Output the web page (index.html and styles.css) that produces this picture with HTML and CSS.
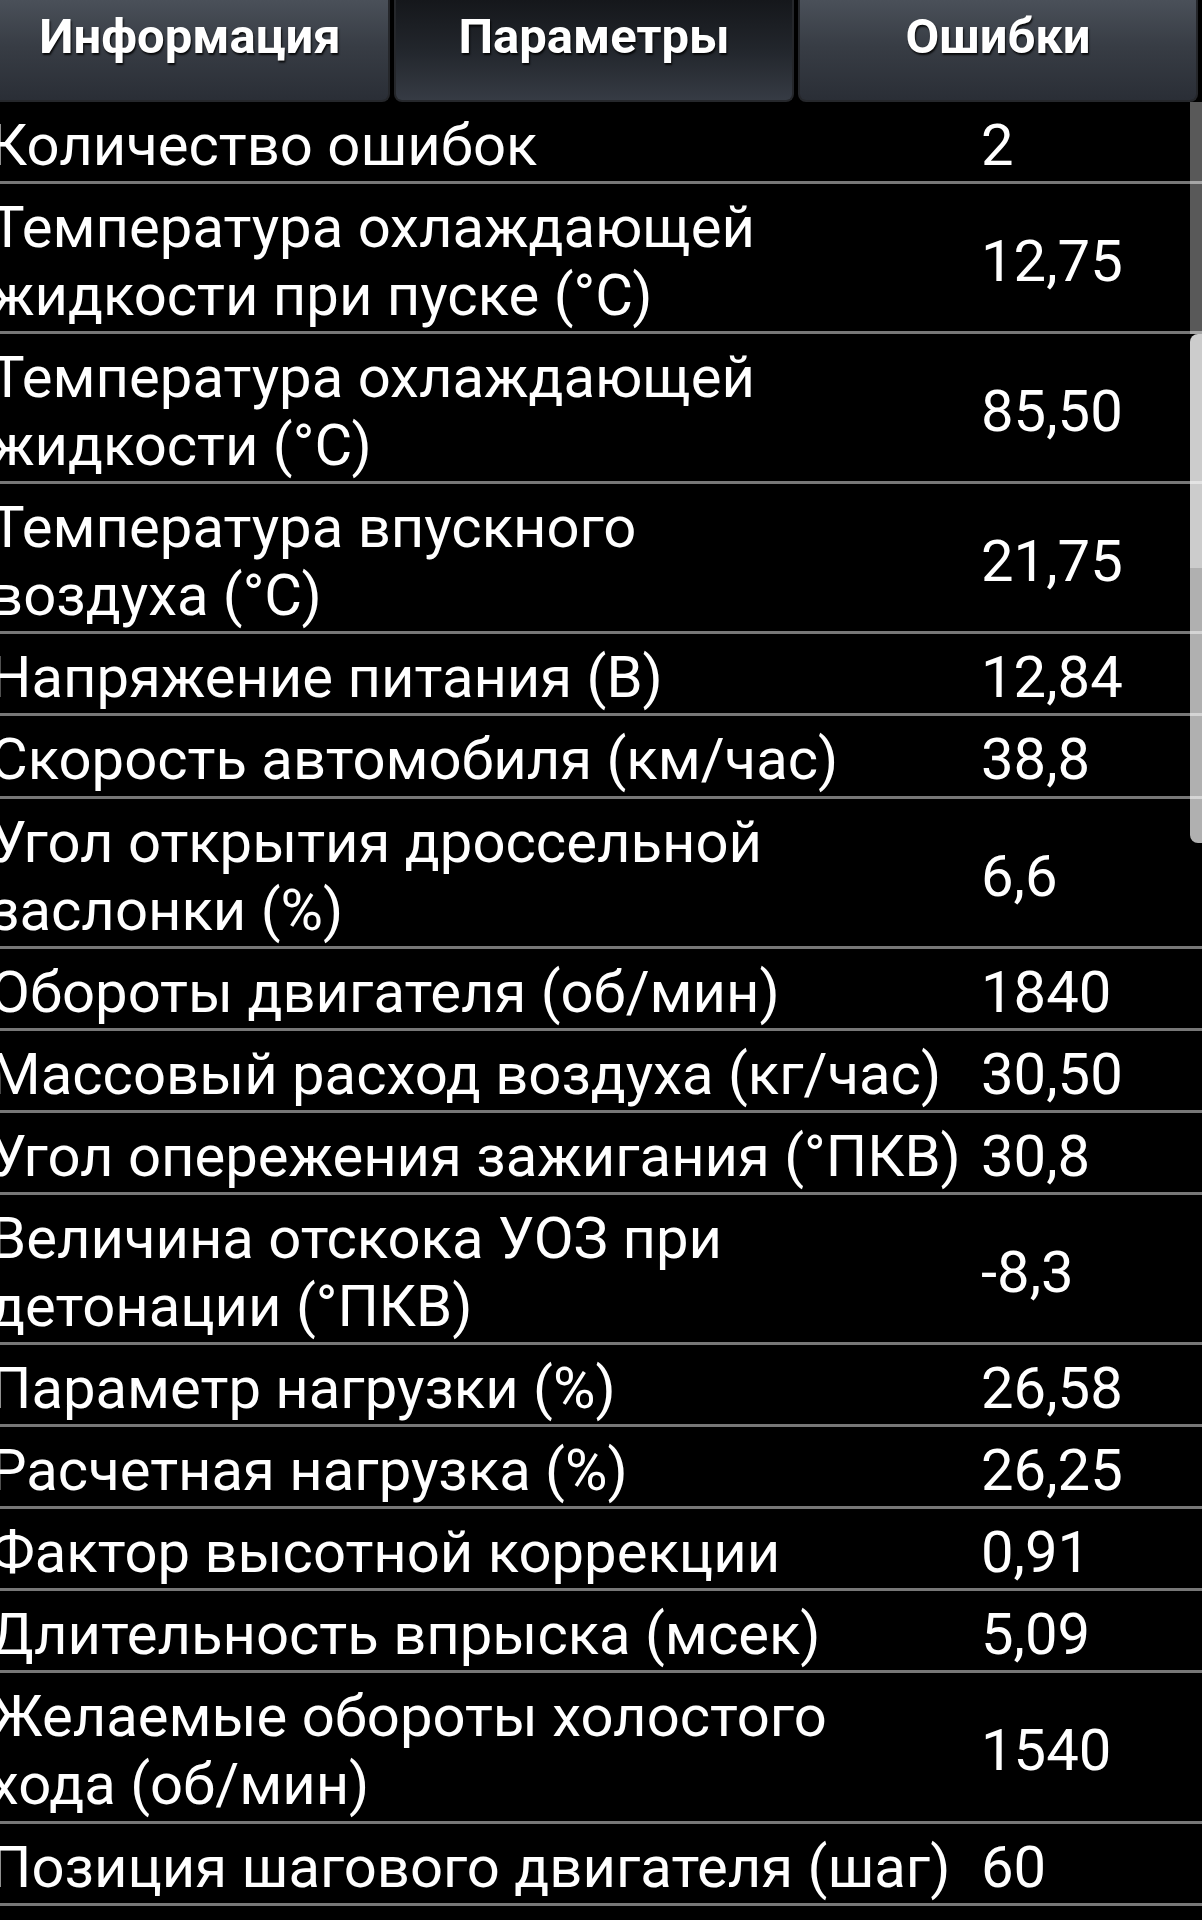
FILE: index.html
```
<!DOCTYPE html>
<html lang="ru">
<head>
<meta charset="utf-8">
<title>Параметры</title>
<link rel="stylesheet" href="styles.css">
</head>
<body>
<div class="screen">
  <div class="tabs">
    <div class="tab">Информация</div>
    <div class="tab tab-active">Параметры</div>
    <div class="tab">Ошибки</div>
  </div>
  <div class="table">
    <div class="row"><div class="label">Количество ошибок</div><div class="value">2</div></div>
    <div class="row"><div class="label">Температура охлаждающей<br>жидкости при пуске (°С)</div><div class="value">12,75</div></div>
    <div class="row"><div class="label">Температура охлаждающей<br>жидкости (°С)</div><div class="value">85,50</div></div>
    <div class="row"><div class="label">Температура впускного<br>воздуха (°С)</div><div class="value">21,75</div></div>
    <div class="row"><div class="label">Напряжение питания (В)</div><div class="value">12,84</div></div>
    <div class="row"><div class="label">Скорость автомобиля (км/час)</div><div class="value">38,8</div></div>
    <div class="row"><div class="label">Угол открытия дроссельной<br>заслонки (%)</div><div class="value">6,6</div></div>
    <div class="row"><div class="label">Обороты двигателя (об/мин)</div><div class="value">1840</div></div>
    <div class="row"><div class="label">Массовый расход воздуха (кг/час)</div><div class="value">30,50</div></div>
    <div class="row"><div class="label">Угол опережения зажигания (°ПКВ)</div><div class="value">30,8</div></div>
    <div class="row"><div class="label">Величина отскока УОЗ при<br>детонации (°ПКВ)</div><div class="value">-8,3</div></div>
    <div class="row"><div class="label">Параметр нагрузки (%)</div><div class="value">26,58</div></div>
    <div class="row"><div class="label">Расчетная нагрузка (%)</div><div class="value">26,25</div></div>
    <div class="row"><div class="label">Фактор высотной коррекции</div><div class="value">0,91</div></div>
    <div class="row"><div class="label">Длительность впрыска (мсек)</div><div class="value">5,09</div></div>
    <div class="row"><div class="label">Желаемые обороты холостого<br>хода (об/мин)</div><div class="value">1540</div></div>
    <div class="row"><div class="label">Позиция шагового двигателя (шаг)</div><div class="value">60</div></div>
  </div>
  <div class="scroll-track"></div>
  <div class="scroll-thumb"></div>
</div>
</body>
</html>
```
FILE: styles.css
```
html, body {
  margin: 0;
  padding: 0;
  background: #000;
  overflow: hidden;
}
body {
  width: 1202px;
  height: 1920px;
  position: relative;
  font-family: Roboto, "Noto Sans", sans-serif;
  color: #fff;
}
.screen {
  margin-left: -10px;
  width: 1212px;
}
.tabs {
  display: flex;
  gap: 4px;
  width: 1208px;
  height: 102px;
}
.tab {
  flex: 1;
  box-sizing: border-box;
  border: 2px solid #25272b;
  border-top: none;
  border-radius: 0 0 8px 8px;
  background: linear-gradient(to bottom, #4a5059 0%, #383d45 45%, #2a2e36 100%);
  font-weight: 700;
  font-size: 49px;
  line-height: 50px;
  padding-top: 12px;
  text-align: center;
  text-shadow: 1px 2px 2px rgba(0, 0, 0, 0.85);
}
.tab-active {
  background: linear-gradient(to bottom, #15171b 0%, #22262c 50%, #363b44 100%);
}
.table {
  margin-top: 0;
}
.row {
  display: flex;
  align-items: center;
  padding: 9px 0 2.1px;
  border-bottom: 3px solid #777;
  font-size: 58px;
  line-height: 68px;
  white-space: nowrap;
}
.label {
  width: 991px;
  flex: none;
}
.value {
  flex: 1;
}
.scroll-track {
  position: absolute;
  right: 0;
  top: 102px;
  width: 12px;
  height: 232px;
  background: rgba(255, 255, 255, 0.35);
}
.scroll-thumb {
  position: absolute;
  right: 0;
  top: 334px;
  width: 12px;
  height: 509px;
  border-radius: 8px 0 0 8px;
  background: linear-gradient(to bottom, rgba(255, 255, 255, 0.8) 0%, rgba(255, 255, 255, 0.8) 46%, rgba(255, 255, 255, 0.69) 46%, rgba(255, 255, 255, 0.69) 100%);
}
```
